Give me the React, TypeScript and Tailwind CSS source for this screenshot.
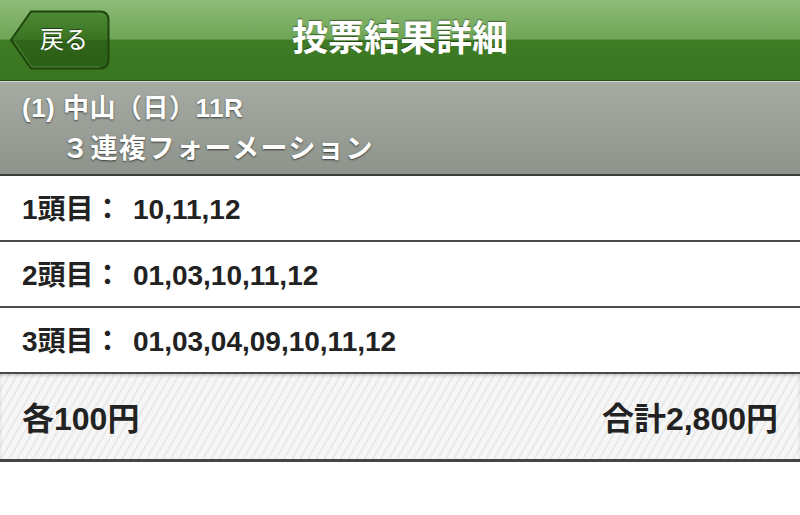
import React from "react";

const FONT = { fontFamily: '"Liberation Sans", "Noto Sans CJK JP", sans-serif' };

const rows = [
  { label: "1頭目", nums: "10,11,12" },
  { label: "2頭目", nums: "01,03,10,11,12" },
  { label: "3頭目", nums: "01,03,04,09,10,11,12" },
];

function BackButton() {
  return (
    <div className="relative ml-[10px] h-[60px] w-[100px]">
      <svg className="absolute inset-0" width="100" height="60" viewBox="0 0 100 60">
        <defs>
          <linearGradient id="bk" x1="0" y1="0" x2="0" y2="1">
            <stop offset="0" stopColor="#4f8a35" />
            <stop offset="0.5" stopColor="#3a7222" />
            <stop offset="0.5" stopColor="#2f6419" />
            <stop offset="1" stopColor="#2c5f17" />
          </linearGradient>
        </defs>
        <path
          d="M1 30 L21 1.5 H90 Q98.5 1.5 98.5 10 V50 Q98.5 58.5 90 58.5 H21 Z"
          fill="url(#bk)"
          stroke="#1f4410"
          strokeWidth="2"
        />
        <path d="M4 31 L22 57 H90" fill="none" stroke="#6aa24f" strokeWidth="1" opacity="0.6" />
      </svg>
      <span className="absolute inset-0 flex items-center justify-center pl-[8px] text-[24px] text-white [text-shadow:0_-1px_0_rgba(0,0,0,0.5)]">
        戻る
      </span>
    </div>
  );
}

export default function App() {
  return (
    <div className="w-[800px] h-[515px] bg-white overflow-hidden" style={FONT}>
      <header className="relative flex h-[81px] items-center border-b border-[#284f16] bg-[linear-gradient(to_bottom,#8dbb78_0%,#6ea556_49%,#3f7c25_50%,#3b7622_100%)]">
        <BackButton />
        <h1 className="absolute inset-0 flex items-center justify-center pb-[3px] text-[36px] font-bold text-white [text-shadow:0_-1px_1px_rgba(0,0,0,0.45)]">
          投票結果詳細
        </h1>
      </header>
      <section className="h-[95px] border-t border-[#d4d8d2] border-b-2 border-b-[#3c3c3c] bg-[linear-gradient(to_bottom,#a5aba3,#8e948c)] pl-[22px] pt-[9px] font-bold text-white [text-shadow:0_1px_2px_rgba(0,0,0,0.6)]">
        <div className="text-[26px] leading-[34px] tracking-[0.5px]">(1) 中山（日）11R</div>
        <div className="pl-[40px] pt-[5px] text-[27px] leading-[38px] tracking-[1.5px]">３連複フォーメーション</div>
      </section>
      {rows.map((r) => (
        <div
          key={r.label}
          className="flex h-[66px] items-center border-b-2 border-[#4a4a4a] pl-[22px] pt-[4px] text-[28px] font-bold text-[#222]"
        >
          <span className="w-[111px] whitespace-nowrap">{r.label}：</span>
          <span>{r.nums}</span>
        </div>
      ))}
      <footer className="flex h-[88px] items-center justify-between border-b-[3px] border-[#444] bg-[repeating-linear-gradient(-60deg,#f6f6f6_0px,#f6f6f6_5px,#e9e9e9_5px,#e9e9e9_7px)] px-[22px] pt-[5px] text-[32px] font-bold text-[#222] shadow-[inset_0_2px_3px_rgba(0,0,0,0.15)]">
        <span>各100円</span>
        <span>合計2,800円</span>
      </footer>
    </div>
  );
}
